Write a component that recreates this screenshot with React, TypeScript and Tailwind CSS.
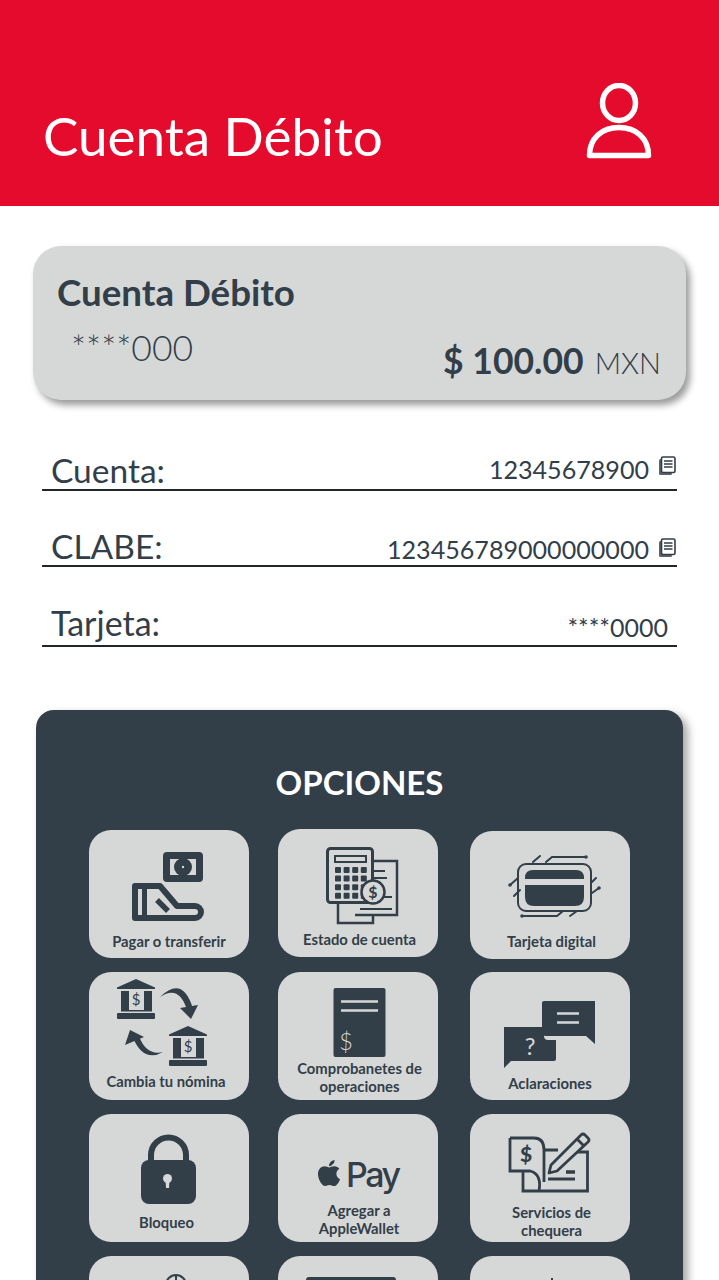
import type { ReactNode } from "react";
import { FaApple } from "react-icons/fa";

const INK = "#323e48";
const TILE = "#d6d8d8";

// icons are drawn in a tile-sized box, viewBox starts at the tile's corner
function TileIcon({ x, y, h, children }: { x: number; y: number; h: number; children: ReactNode }) {
  return (
    <svg width={160} height={h} viewBox={`${x} ${y} 160 ${h}`} className="shrink-0">
      {children}
    </svg>
  );
}

function Tile({
  label,
  icon,
  className = "",
  labelClass = "",
}: {
  label?: string[];
  icon: ReactNode;
  className?: string;
  labelClass?: string;
}) {
  return (
    <div className={`flex h-[128px] w-[160px] flex-col items-center overflow-hidden rounded-[22px] bg-[#d6d8d8] ${className}`}>
      {icon}
      {label && (
        <div className={`-mt-px text-center text-[14.8px] leading-[18px] font-bold whitespace-nowrap text-[#323e48] ${labelClass}`}>
          {label.map((line) => (
            <div key={line}>{line}</div>
          ))}
        </div>
      )}
    </div>
  );
}

function CopyIcon() {
  return (
    <svg width="18" height="20" viewBox="0 0 18 20" className="shrink-0">
      <rect x="1" y="3" width="13" height="16" rx="1.5" fill="#5a6570" />
      <rect x="3.5" y="1" width="13.5" height="15.5" rx="1.5" fill="#fff" stroke={INK} strokeWidth="1.6" />
      <path d="M6 5h8.5M6 8h8.5M6 11h8.5" stroke={INK} strokeWidth="1.4" />
    </svg>
  );
}

function Bank({ x, y }: { x: number; y: number }) {
  return (
    <g transform={`translate(${x} ${y})`} fill={INK}>
      <path d="M19 0 38 8.500V10H0V8.500Z" />
      <rect x="4" y="12" width="8" height="19" />
      <rect x="27" y="12" width="8" height="19" />
      <rect x="4" y="31" width="31" height="1.500" />
      <rect x="0" y="34" width="38" height="6" rx="1" />
      <text x="19" y="26" textAnchor="middle" fontSize="15" fontFamily="Lato">
        $
      </text>
    </g>
  );
}

const buttons: [number, number][] = [];
for (let r = 0; r < 4; r++) for (let c = 0; c < 4; c++) buttons.push([335 + c * 8.6, 867 + r * 8.600]);

export default function App() {
  return (
    <div className="relative h-[1280px] w-[719px] overflow-hidden bg-white font-['Lato',sans-serif] text-[#323e48]">
      <header className="flex h-[206px] items-end justify-between bg-[#e40b2c] pr-[67px] pb-[39px] pl-[43px] text-white">
        <h1 className="text-[53px] leading-[62px] font-normal">Cuenta Débito</h1>
        <svg width="66" height="76" viewBox="0 0 66 76" className="mb-[8px]" fill="none" stroke="#fff" strokeWidth="5.500">
          <ellipse cx="33" cy="20" rx="16.500" ry="17.500" />
          <path d="M3.500 72.500C3.500 55 16 44.500 33 44.500S62.500 55 62.500 72.500Z" strokeLinejoin="round" />
        </svg>
      </header>

      <section className="mx-[33px] mt-[40px] h-[154px] w-[653px] rounded-[28px] bg-[#d6d8d8] pt-[23px] pr-[25px] pl-[24px] shadow-[4px_5px_7px_rgba(0,0,0,0.4)]">
        <div className="text-[36.7px] leading-[46px] font-bold">Cuenta Débito</div>
        <div className="flex items-start justify-between">
          <div className="mt-[10px] ml-[14px] text-[35.500px] leading-[46px] font-light">****000</div>
          <div className="mt-[24px] flex items-baseline gap-[11px]">
            <span className="text-[35.500px] leading-[44px] font-bold">$ 100.00</span>
            <span className="text-[29px] leading-[44px] font-light">MXN</span>
          </div>
        </div>
      </section>

      <div className="mx-[42px] mt-[43px] w-[635px]">
        <div className="flex h-[48px] items-end justify-between border-b-2 border-[#22262b] pr-[1px] pl-[9px]">
          <span className="-mb-[2px] text-[33.500px] leading-[42px]">Cuenta:</span>
          <span className="mb-[3px] flex items-start gap-[9px] text-[25.100px] leading-[34px]">
            12345678900
            <span className="mt-[4px]">
              <CopyIcon />
            </span>
          </span>
        </div>
        <div className="flex h-[76px] items-end justify-between border-b-2 border-[#22262b] pr-[1px] pl-[9px]">
          <span className="-mb-[2px] text-[33.500px] leading-[42px]">CLABE:</span>
          <span className="-mb-[1px] flex items-start gap-[9px] text-[25.100px] leading-[34px]">
            123456789000000000
            <span className="mt-[6px]">
              <CopyIcon />
            </span>
          </span>
        </div>
        <div className="flex h-[80px] items-end justify-between border-b-2 border-[#22262b] pr-[9px] pl-[9px]">
          <span className="mb-[1px] text-[34px] leading-[42px]">Tarjeta:</span>
          <span className="mb-[1px] text-[25px] leading-[34px]">****0000</span>
        </div>
      </div>

      <section className="mx-[36px] mt-[63px] w-[647px] rounded-[18px] bg-[#323e48] pt-[50px] pb-[40px] pl-[53px] shadow-[5px_4px_9px_rgba(0,0,0,0.35)]">
        <h2 className="-ml-[53px] text-center text-[33px] leading-[44px] font-bold text-white">OPCIONES</h2>
        <div className="mt-[26px] grid grid-cols-[189px_192px_160px] gap-y-[14px]">
          <Tile
            label={["Pagar o transferir"]}
            icon={
              <TileIcon x={89} y={830} h={103}>
                <rect x="163" y="852" width="40" height="30" rx="4" fill={INK} />
                <rect x="170" y="859" width="26" height="16" fill={TILE} />
                <circle cx="183" cy="867" r="9" fill={INK} />
                <circle cx="183" cy="867" r="1.200" fill={TILE} />
                <path d="M135 886H160L177 906H195A6 6 0 0 1 195 918H135Z" fill="none" stroke={INK} strokeWidth="6" strokeLinejoin="round" />
                <path d="M144.500 885V919" stroke={INK} strokeWidth="5" />
                <path d="M157 900 168 911" stroke={INK} strokeWidth="5.500" />
              </TileIcon>
            }
          />
          <Tile
            className="-translate-y-px"
            label={["Estado de cuenta"]}
            labelClass="ml-[3px]"
            icon={
              <TileIcon x={278} y={829} h={102}>
                <g fill="none" stroke={INK}>
                  <path d="M373 861H397V915H355" strokeWidth="2.500" />
                  <path d="M338 903V923H373V915" strokeWidth="2.500" />
                  <path d="M373 871H385M373 878H387M382 897H392M360 909H392" strokeWidth="2" />
                  <rect x="327.500" y="848.500" width="45" height="54" rx="3" fill={TILE} strokeWidth="3" />
                  <rect x="335" y="856" width="31" height="6" strokeWidth="2" />
                </g>
                {buttons.map(([bx, by]) => (
                  <rect key={`${bx}-${by}`} x={bx} y={by} width="6" height="6" rx="1" fill={INK} />
                ))}
                <circle cx="373" cy="892" r="11.500" fill={TILE} stroke={INK} strokeWidth="2.500" />
                <text x="373" y="898" textAnchor="middle" fontSize="16" fontWeight="700" fontFamily="Lato" fill={INK}>
                  $
                </text>
              </TileIcon>
            }
          />
          <Tile
            className="translate-y-px"
            label={["Tarjeta digital"]}
            labelClass="ml-[3px]"
            icon={
              <TileIcon x={470} y={831} h={102}>
                <rect x="518" y="864" width="73" height="47" rx="8" fill="none" stroke={INK} strokeWidth="2" />
                <path d="M525 879V878Q525 870 533 870H576Q584 870 584 878V879Z" fill={INK} />
                <path d="M525 885H584V897Q584 906 575 906H534Q525 906 525 897Z" fill={INK} />
                <g fill="none" stroke={INK} strokeWidth="2" strokeLinecap="round">
                  <path d="M533 862 540 856M546 862 552 857H585" />
                  <path d="M510 885 518 878M514 896 520 890M592 882 596 878M592 893 599 888" />
                  <path d="M522 916H557L563 911M570 916 577 911" />
                </g>
                <circle cx="586" cy="857" r="1.800" fill={INK} />
                <circle cx="522" cy="916" r="1.800" fill={INK} />
                <circle cx="599" cy="888" r="1.800" fill={INK} />
                <circle cx="510" cy="885" r="1.800" fill={INK} />
              </TileIcon>
            }
          />

          <Tile
            label={["Cambia tu nómina"]}
            labelClass="-ml-[6px]"
            icon={
              <TileIcon x={89} y={972} h={101}>
                <Bank x={117} y={979} />
                <Bank x={169} y={1026} />
                <path d="M160 997Q179 984 187 1010L193 1009Q183 975 160 997Z" fill={INK} />
                <path d="M191 1019 180 1008 198 1005Z" fill={INK} />
                <path d="M163 1052Q144 1063 133 1038L139 1036Q146 1056 163 1052Z" fill={INK} />
                <path d="M130 1030 125 1045 144 1037Z" fill={INK} />
              </TileIcon>
            }
          />
          <Tile
            label={["Comprobanetes de", "operaciones"]}
            labelClass="ml-[3px]"
            icon={
              <TileIcon x={278} y={972} h={88}>
                <rect x="333.500" y="988" width="52" height="69" rx="2" fill={INK} />
                <path d="M341 1001.500H378M341 1010.500H378" stroke={TILE} strokeWidth="2.500" />
                <text x="346" y="1050" textAnchor="middle" fontSize="24" fontWeight="300" fontFamily="Lato" fill={TILE}>
                  $
                </text>
              </TileIcon>
            }
          />
          <Tile
            label={["Aclaraciones"]}
            icon={
              <TileIcon x={470} y={972} h={103}>
                <path d="M504 1027H544V1036Q544 1040 548 1040H556V1059Q556 1061 554 1061H511L504 1068Z" fill={INK} />
                <path d="M542 1003Q542 1001 544 1001H595V1044L586 1036H546Q542 1036 542 1032Z" fill={INK} />
                <path d="M557 1013.500H579M557 1022.500H579" stroke={TILE} strokeWidth="2.500" />
                <text x="530" y="1055" textAnchor="middle" fontSize="24" fontFamily="Lato" fill={TILE}>
                  ?
                </text>
              </TileIcon>
            }
          />

          <Tile
            label={["Bloqueo"]}
            labelClass="-ml-[5px]"
            icon={
              <TileIcon x={89} y={1114} h={100}>
                <path d="M151 1162V1155A17.500 17.500 0 0 1 186 1155V1162" fill="none" stroke={INK} strokeWidth="6" />
                <rect x="141" y="1160" width="55" height="44" rx="8" fill={INK} />
                <circle cx="167.500" cy="1178.500" r="4.500" fill={TILE} />
                <path d="M165.500 1180H169.500L169 1188H166Z" fill={TILE} />
              </TileIcon>
            }
          />
          <Tile
            label={["Agregar a", "AppleWallet"]}
            labelClass="ml-[2px]"
            icon={
              <div className="flex h-[88px] w-[160px] items-start pl-[36px]">
                <FaApple size={30} className="mt-[44px] shrink-0" color={INK} />
                <span className="mt-[38px] ml-[2px] font-['Inter',sans-serif] text-[34px] leading-[46px] font-medium tracking-[-2.5px]">Pay</span>
              </div>
            }
          />
          <Tile
            label={["Servicios de", "chequera"]}
            labelClass="ml-[3px]"
            icon={
              <TileIcon x={470} y={1114} h={90}>
                <g fill="none" stroke={INK} strokeWidth="2.800">
                  <path d="M510 1138H534Q544 1138 544 1150V1182" />
                  <path d="M510 1138V1171H530Q542 1174 539 1191" />
                  <path d="M523 1172V1191H587.500V1152H570" />
                  <path d="M544 1150H558" />
                  <path d="M548 1179H575" />
                  <path d="M549 1173 551 1165 581 1135Q583 1133 585 1135L588 1138Q590 1140 588 1142L557 1171Z" fill={TILE} strokeLinejoin="round" />
                  <path d="M577 1139 584 1146" />
                </g>
                <path d="M566 1172H575" stroke={INK} strokeWidth="3.500" />
                <text x="526" y="1162" textAnchor="middle" fontSize="21" fontWeight="900" fontFamily="Lato" fill={INK}>
                  $
                </text>
              </TileIcon>
            }
          />

          <Tile
            icon={
              <TileIcon x={89} y={1256} h={60}>
                <circle cx="176" cy="1285" r="10" fill="none" stroke={INK} strokeWidth="2" />
                <path d="M176 1276V1282" stroke={INK} strokeWidth="2" />
              </TileIcon>
            }
          />
          <Tile
            icon={
              <TileIcon x={278} y={1256} h={60}>
                <rect x="306" y="1277" width="90" height="30" rx="3" fill={INK} />
              </TileIcon>
            }
          />
          <Tile
            icon={
              <TileIcon x={470} y={1256} h={60}>
                <path d="M552 1278V1290" stroke={INK} strokeWidth="2" />
              </TileIcon>
            }
          />
        </div>
      </section>
    </div>
  );
}
